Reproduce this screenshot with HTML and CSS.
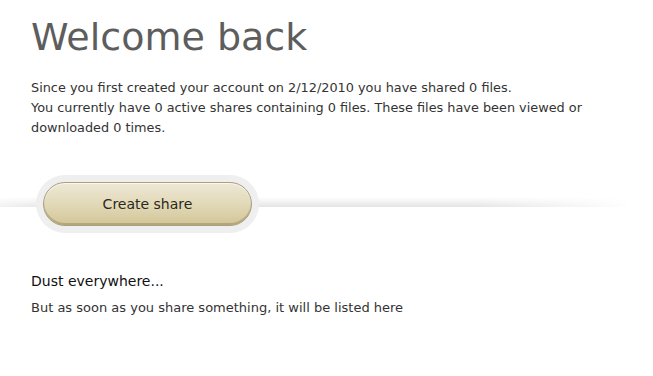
FILE: index.html
```html
<!DOCTYPE html>
<html>
<head>
  <title>Welcome back</title>
  <link rel="stylesheet" href="styles.css">
</head>

<body>
  <main class="dashboard">
    <h1 class="dashboard__title">Welcome back</h1>

    <div class="dashboard__stats">
      <p>Since you first created your account on 2/12/2010 you have shared 0 files.</p>
      <p>You currently have 0 active shares containing 0 files. These files have been viewed or downloaded 0 times.</p>
    </div>
  </main>

  <div class="action-bar">
    <div class="action-bar__halo">
      <button type="button" class="action-bar__button">Create share</button>
    </div>
  </div>

  <section class="shares">
    <h2 class="shares__title">Dust everywhere...</h2>
    <p class="shares__empty">But as soon as you share something, it will be listed here</p>
  </section>
</body>

</html>
```

FILE: styles.css
```css
* {
  box-sizing: border-box;
}

body {
  margin: 0;
  font-family: "DejaVu Sans", Verdana, sans-serif;
  font-size: 13px;
  line-height: 20px;
  color: #333333;
  background-color: #ffffff;
}

p {
  margin: 0;
}

.dashboard {
  padding: 12px 40px 0 31px;
}

.dashboard__title {
  margin: 0 0 16px;
  font-size: 38px;
  font-weight: normal;
  line-height: 50px;
  color: #5d5d5d;
}

.dashboard__stats {
  font-size: 12.85px;
}

.action-bar {
  position: relative;
  margin-top: 37px;
  padding-left: 36px;
}

.action-bar::before {
  content: "";
  position: absolute;
  left: 0;
  top: 22px;
  width: 632px;
  height: 10px;
  background: linear-gradient(to bottom, rgba(255, 255, 255, 0), rgba(225, 225, 225, 0.9));
  -webkit-mask-image: linear-gradient(to right, rgba(0, 0, 0, 0.5), #000 8%, #000 75%, rgba(0, 0, 0, 0));
  mask-image: linear-gradient(to right, rgba(0, 0, 0, 0.5), #000 8%, #000 75%, rgba(0, 0, 0, 0));
}

.action-bar__halo {
  position: relative;
  display: inline-block;
  padding: 7px;
  border-radius: 30px;
  background-color: #efefef;
}

.action-bar__button {
  display: block;
  width: 209px;
  height: 44px;
  border: 1px solid #a8a07e;
  border-radius: 22px;
  background: linear-gradient(to bottom, #eee8d6, #e2d9b8 50%, #d2c597);
  box-shadow: inset 0 1px 0 rgba(255, 255, 255, 0.7), inset 0 -2px 0 rgba(120, 110, 70, 0.35);
  font-family: "DejaVu Sans", Verdana, sans-serif;
  font-size: 14px;
  color: #2b2820;
  cursor: pointer;
}

.shares {
  padding: 38px 31px 0;
}

.shares__title {
  margin: 0 0 7px;
  font-size: 14px;
  font-weight: normal;
  line-height: 20px;
  color: #111111;
}

.shares__empty {
  color: #333333;
}
```
